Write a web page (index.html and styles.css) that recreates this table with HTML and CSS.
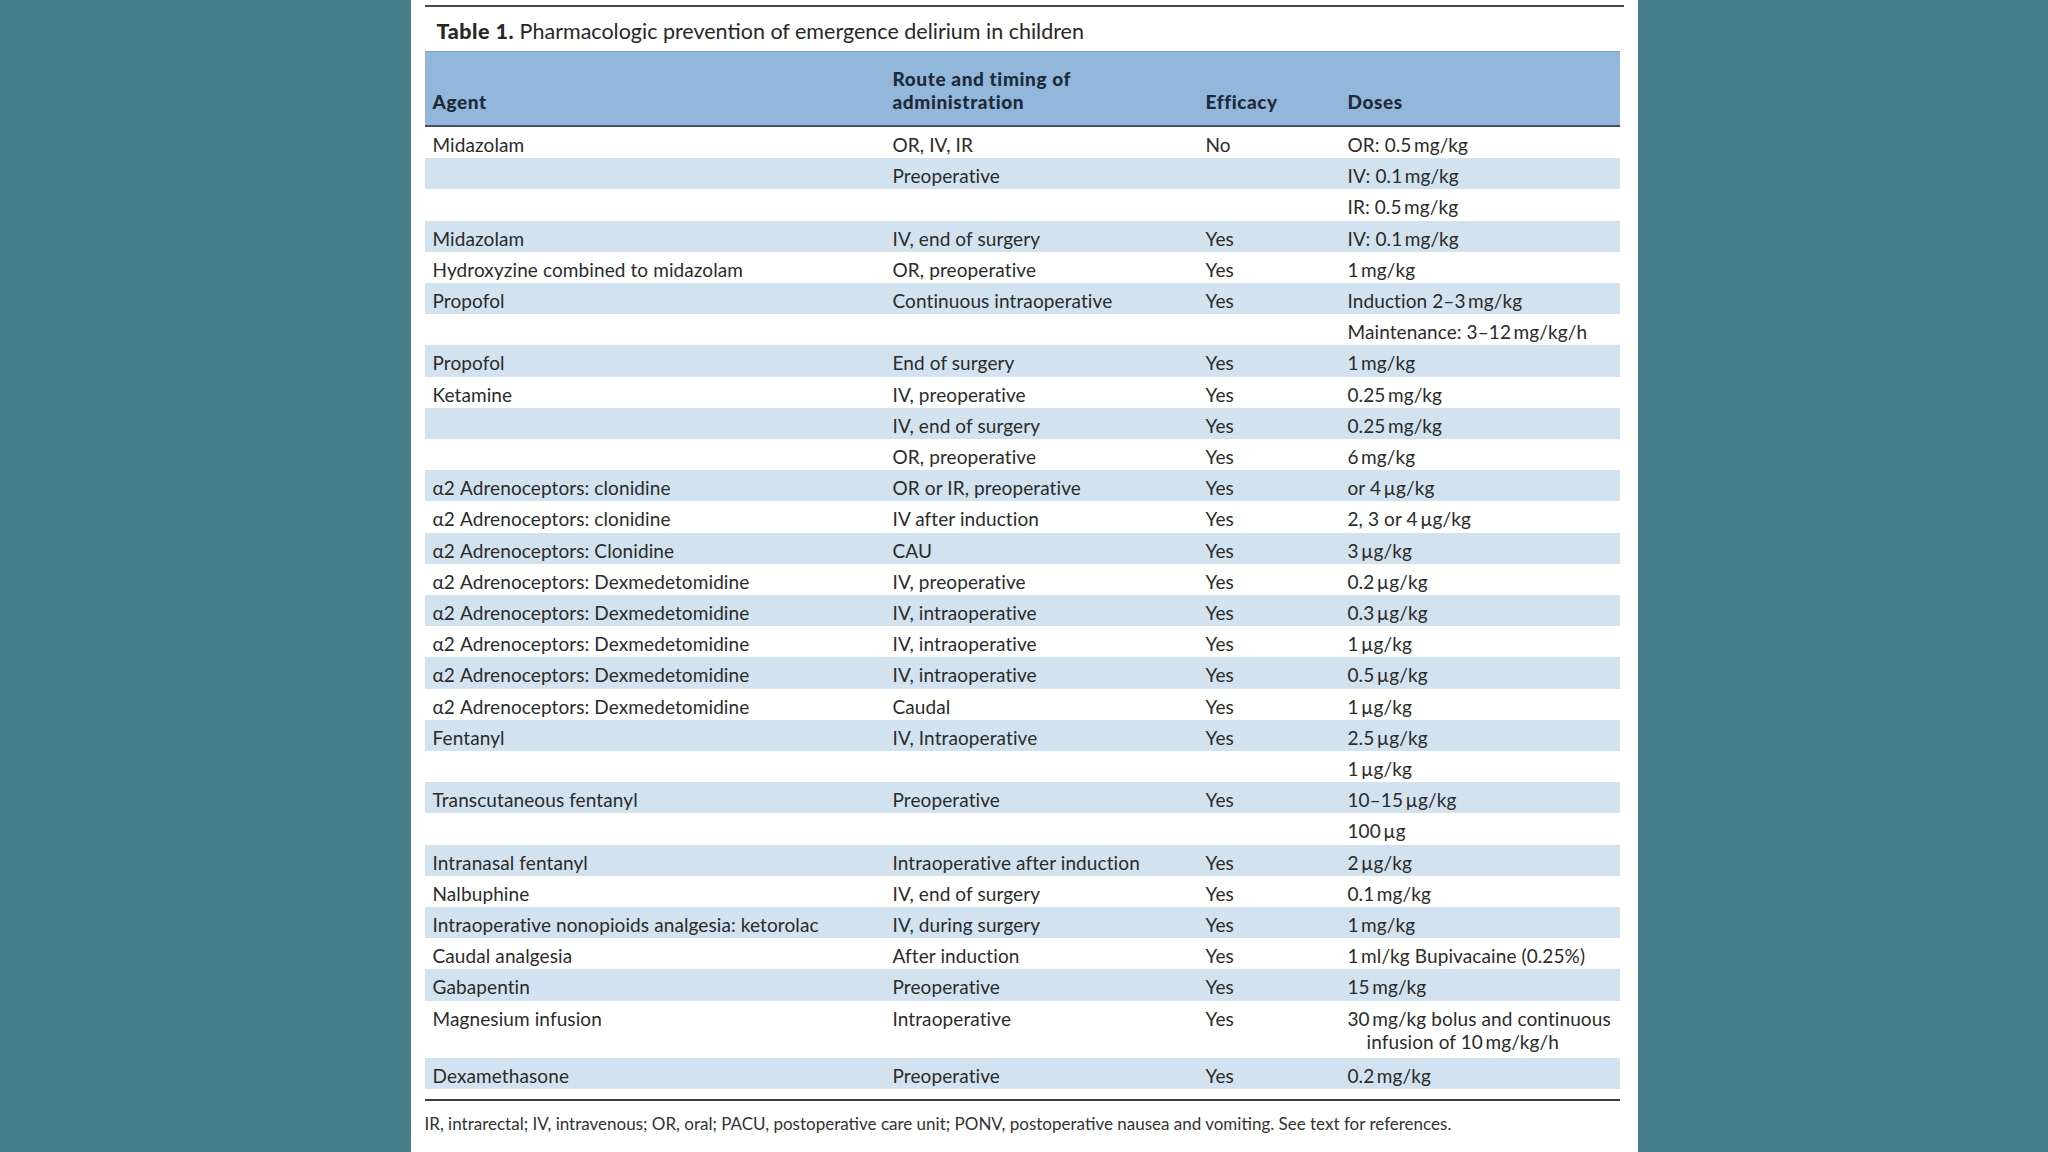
FILE: index.html
```html
<!DOCTYPE html>
<html lang="en">
<head>
  <meta charset="UTF-8" />
  <title>Table 1. Pharmacologic prevention of emergence delirium in children</title>
  <meta name="viewport" content="width=device-width, initial-scale=1" />
  <link rel="stylesheet" href="styles.css">
</head>
<body>
  <div class="page">
    <div class="caption"><b>Table 1.</b> Pharmacologic prevention of emergence delirium in children</div>

    <table class="drugs">
      <colgroup>
        <col class="c-agent" />
        <col class="c-route" />
        <col class="c-eff" />
        <col class="c-dose" />
      </colgroup>
      <thead>
        <tr>
          <th>Agent</th>
          <th>Route and timing of<br>administration</th>
          <th>Efficacy</th>
          <th>Doses</th>
        </tr>
      </thead>
      <tbody>
        <tr><td>Midazolam</td><td>OR, IV, IR</td><td>No</td><td>OR: 0.5&#8201;mg/kg</td></tr>
        <tr class="alt"><td></td><td>Preoperative</td><td></td><td>IV: 0.1&#8201;mg/kg</td></tr>
        <tr><td></td><td></td><td></td><td>IR: 0.5&#8201;mg/kg</td></tr>
        <tr class="alt"><td>Midazolam</td><td>IV, end of surgery</td><td>Yes</td><td>IV: 0.1&#8201;mg/kg</td></tr>
        <tr><td>Hydroxyzine combined to midazolam</td><td>OR, preoperative</td><td>Yes</td><td>1&#8201;mg/kg</td></tr>
        <tr class="alt"><td>Propofol</td><td>Continuous intraoperative</td><td>Yes</td><td>Induction 2&ndash;3&#8201;mg/kg</td></tr>
        <tr><td></td><td></td><td></td><td>Maintenance: 3&ndash;12&#8201;mg/kg/h</td></tr>
        <tr class="alt"><td>Propofol</td><td>End of surgery</td><td>Yes</td><td>1&#8201;mg/kg</td></tr>
        <tr><td>Ketamine</td><td>IV, preoperative</td><td>Yes</td><td>0.25&#8201;mg/kg</td></tr>
        <tr class="alt"><td></td><td>IV, end of surgery</td><td>Yes</td><td>0.25&#8201;mg/kg</td></tr>
        <tr><td></td><td>OR, preoperative</td><td>Yes</td><td>6&#8201;mg/kg</td></tr>
        <tr class="alt"><td>&alpha;2 Adrenoceptors: clonidine</td><td>OR or IR, preoperative</td><td>Yes</td><td>or 4&#8201;&micro;g/kg</td></tr>
        <tr><td>&alpha;2 Adrenoceptors: clonidine</td><td>IV after induction</td><td>Yes</td><td>2, 3 or 4&#8201;&micro;g/kg</td></tr>
        <tr class="alt"><td>&alpha;2 Adrenoceptors: Clonidine</td><td>CAU</td><td>Yes</td><td>3&#8201;&micro;g/kg</td></tr>
        <tr><td>&alpha;2 Adrenoceptors: Dexmedetomidine</td><td>IV, preoperative</td><td>Yes</td><td>0.2&#8201;&micro;g/kg</td></tr>
        <tr class="alt"><td>&alpha;2 Adrenoceptors: Dexmedetomidine</td><td>IV, intraoperative</td><td>Yes</td><td>0.3&#8201;&micro;g/kg</td></tr>
        <tr><td>&alpha;2 Adrenoceptors: Dexmedetomidine</td><td>IV, intraoperative</td><td>Yes</td><td>1&#8201;&micro;g/kg</td></tr>
        <tr class="alt"><td>&alpha;2 Adrenoceptors: Dexmedetomidine</td><td>IV, intraoperative</td><td>Yes</td><td>0.5&#8201;&micro;g/kg</td></tr>
        <tr><td>&alpha;2 Adrenoceptors: Dexmedetomidine</td><td>Caudal</td><td>Yes</td><td>1&#8201;&micro;g/kg</td></tr>
        <tr class="alt"><td>Fentanyl</td><td>IV, Intraoperative</td><td>Yes</td><td>2.5&#8201;&micro;g/kg</td></tr>
        <tr><td></td><td></td><td></td><td>1&#8201;&micro;g/kg</td></tr>
        <tr class="alt"><td>Transcutaneous fentanyl</td><td>Preoperative</td><td>Yes</td><td>10&ndash;15&#8201;&micro;g/kg</td></tr>
        <tr><td></td><td></td><td></td><td>100&#8201;&micro;g</td></tr>
        <tr class="alt"><td>Intranasal fentanyl</td><td>Intraoperative after induction</td><td>Yes</td><td>2&#8201;&micro;g/kg</td></tr>
        <tr><td>Nalbuphine</td><td>IV, end of surgery</td><td>Yes</td><td>0.1&#8201;mg/kg</td></tr>
        <tr class="alt"><td>Intraoperative nonopioids analgesia: ketorolac</td><td>IV, during surgery</td><td>Yes</td><td>1&#8201;mg/kg</td></tr>
        <tr><td>Caudal analgesia</td><td>After induction</td><td>Yes</td><td>1&#8201;ml/kg Bupivacaine (0.25%)</td></tr>
        <tr class="alt"><td>Gabapentin</td><td>Preoperative</td><td>Yes</td><td>15&#8201;mg/kg</td></tr>
        <tr class="tall"><td>Magnesium infusion</td><td>Intraoperative</td><td>Yes</td><td class="hang">30&#8201;mg/kg bolus and continuous<br>infusion of 10&#8201;mg/kg/h</td></tr>
        <tr class="alt"><td>Dexamethasone</td><td>Preoperative</td><td>Yes</td><td>0.2&#8201;mg/kg</td></tr>
      </tbody>
    </table>
    <div class="end-rule"></div>

    <p class="note">IR, intrarectal; IV, intravenous; OR, oral; PACU, postoperative care unit; PONV, postoperative nausea and vomiting. See text for references.</p>
  </div>
</body>
</html>
```

FILE: styles.css
```css
html, body {
  margin: 0;
  height: 100%;
}
body {
  background-color: #467d8b;
  font-family: Lato, "Liberation Sans", Arial, sans-serif;
  color: #2b2b2b;
}
.page {
  width: 1199px;
  height: 1152px;
  margin: 0 auto;
  padding: 0 14px;
  background: #fff;
  box-sizing: content-box;
  overflow: hidden;
}
.caption {
  border-top: 2px solid #4a4a4a;
  margin-top: 5px;
  height: 44px;
  line-height: 48px;
  font-size: 21.5px;
  color: #2a2626;
  padding-left: 12px;
}
.caption b {
  font-weight: 900;
  letter-spacing: 0.5px;
}
.drugs {
  width: 1195px;
  table-layout: fixed;
  border-collapse: collapse;
  font-size: 19px;
  letter-spacing: 0.1px;
}
.c-agent { width: 460px; }
.c-route { width: 313px; }
.c-eff { width: 142px; }
.c-dose { width: 280px; }
th {
  background-color: #92b7db;
  border-top: 1px solid #7f9fbe;
  border-bottom: 2px solid #46505c;
  height: 61px;
  text-align: left;
  vertical-align: bottom;
  padding: 0 8px 12px;
  font-size: 19px;
  font-weight: 900;
  letter-spacing: 0.6px;
  line-height: 23px;
  color: #1d2a3a;
}
td {
  padding: 6px 8px 2px;
  line-height: 23.2px;
  height: 23.2px;
  white-space: nowrap;
  vertical-align: top;
}
tr.alt td {
  background-color: #d2e2ee;
}
tr.tall td {
  padding-top: 6px;
  padding-bottom: 5px;
}
td.hang {
  padding-left: 27px;
  text-indent: -19px;
}
.end-rule {
  width: 1195px;
  margin-top: 10px;
  border-top: 2px solid #3e3e3e;
}
.note {
  margin: 12px 0 0;
  font-size: 17px;
  color: #333;
}
```
